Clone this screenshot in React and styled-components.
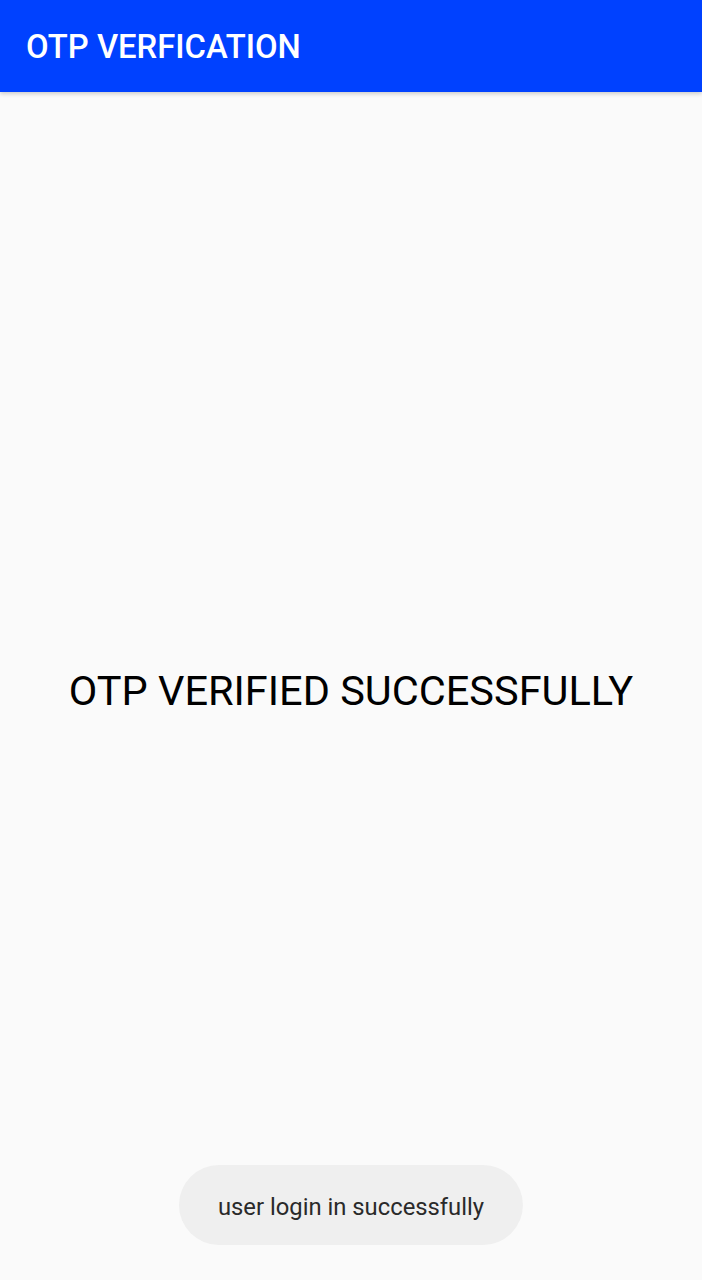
import React from 'react';
import styled, { createGlobalStyle } from 'styled-components';

const GlobalStyle = createGlobalStyle`
  html, body, #root {
    margin: 0;
    padding: 0;
    height: 100%;
  }
  body {
    background: #fafafa;
    font-family: Roboto, "Liberation Sans", sans-serif;
  }
`;

const Screen = styled.div`
  position: relative;
  display: flex;
  flex-direction: column;
  height: 1280px;
  background: #fafafa;
  overflow: hidden;
`;

const AppBar = styled.header`
  height: 92px;
  flex-shrink: 0;
  background: #0041ff;
  display: flex;
  align-items: center;
  padding: 2px 26px 0;
  box-sizing: border-box;
  box-shadow: 0 2px 4px rgba(0, 0, 0, 0.18);
  z-index: 1;
`;

const Title = styled.h1`
  margin: 0;
  color: #ffffff;
  font-size: 32.8px;
  font-weight: 500;
`;

const Content = styled.main`
  flex: 1;
  display: flex;
  align-items: center;
  justify-content: center;
  padding-top: 8px;
`;

const Message = styled.p`
  margin: 0;
  color: #000000;
  font-size: 41.5px;
  font-weight: 400;
`;

const Toast = styled.div`
  position: absolute;
  left: 50%;
  bottom: 35px;
  transform: translateX(-50%);
  height: 80px;
  box-sizing: border-box;
  padding: 3px 39px 0;
  display: flex;
  align-items: center;
  background: #efefef;
  border-radius: 40px;
  color: #2a2a2a;
  font-size: 23.8px;
  white-space: nowrap;
`;

export default function App() {
  return (
    <>
      <GlobalStyle />
      <Screen>
        <AppBar>
          <Title>OTP VERFICATION</Title>
        </AppBar>
        <Content>
          <Message>OTP VERIFIED SUCCESSFULLY</Message>
        </Content>
        <Toast>user login in successfully</Toast>
      </Screen>
    </>
  );
}
